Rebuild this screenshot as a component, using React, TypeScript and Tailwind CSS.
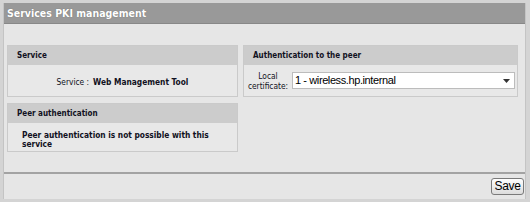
export default function App() {
  return (
    <div className="w-[530px] h-[202px] bg-[#d4d4d4] pt-[3px] pl-[3px] pr-[4px] font-['DejaVu_Sans_Condensed','DejaVu_Sans',sans-serif] text-[#111122]">
      <div className="border-l border-r border-[#c4c4c4]">
        {/* Title bar */}
        <div className="h-[21px] bg-[#999999] border-b border-[#888] px-[3px] text-[10.5px] leading-[20px] font-bold text-white [text-shadow:0_0_1px_#666]">
          Services PKI management
        </div>

        {/* Content */}
        <div className="bg-[#e6e6e6] h-[147px] pl-[3px] pr-[7px] pt-[21px]">
          <div className="grid grid-cols-[231px_275px] gap-x-[5px] items-start">
            <div className="flex flex-col gap-[6px]">
              <div className="border border-[#cacaca]">
                <div className="h-[19px] bg-[#cccccc] pl-[9px] text-[8px] leading-[19px] font-bold">Service</div>
                <div className="h-[31px] bg-[#e8e8e8] flex items-center justify-center pt-[4px] text-[8.3px] gap-[4px]">
                  <span>Service :</span>
                  <span className="font-bold">Web Management Tool</span>
                </div>
              </div>
              <div className="border border-[#cacaca]">
                <div className="h-[19px] bg-[#cccccc] pl-[9px] text-[8px] leading-[19px] font-bold">Peer authentication</div>
                <div className="h-[28px] bg-[#e8e8e8] pl-[14px] pt-[8px] text-[8.3px] leading-[9px] font-bold">
                  Peer authentication is not possible with this service
                </div>
              </div>
            </div>

            <div className="border border-[#cacaca]">
              <div className="h-[19px] bg-[#cccccc] pl-[9px] text-[8px] leading-[19px] font-bold">Authentication to the peer</div>
              <div className="h-[31px] bg-[#e8e8e8] flex items-center pl-[2px] pr-[2px]">
                <div className="w-[44px] text-[8.3px] leading-[10px] text-center">
                  Local
                  <br />
                  certificate:
                </div>
                <div className="ml-[2px] flex-1 h-[17px] bg-white border border-[#bcbcbc] flex items-center justify-between pl-[2px] pr-[4px] font-['Liberation_Sans',Arial,sans-serif] text-[11px] tracking-[-0.4px] text-black">
                  <span>1 - wireless.hp.internal</span>
                  <svg width="7" height="4" viewBox="0 0 7 4">
                    <path d="M0 0 H7 L3.5 4 Z" fill="#333" />
                  </svg>
                </div>
              </div>
            </div>
          </div>
        </div>

        {/* Separator */}
        <div className="h-[1px] bg-[#e6e6e6]" />
        <div className="h-[2px] bg-[#a3a3a3]" />

        {/* Footer */}
        <div className="h-[25px] bg-[#e6e6e6] flex justify-end items-center pr-[1px]">
          <button className="w-[33px] h-[17px] border border-[#7a7a7a] rounded-[3px] bg-gradient-to-b from-white to-[#dcdcdc] font-['Liberation_Sans',Arial,sans-serif] text-[12px] tracking-[-0.3px] leading-[15px] text-black">
            Save
          </button>
        </div>
      </div>
    </div>
  );
}
